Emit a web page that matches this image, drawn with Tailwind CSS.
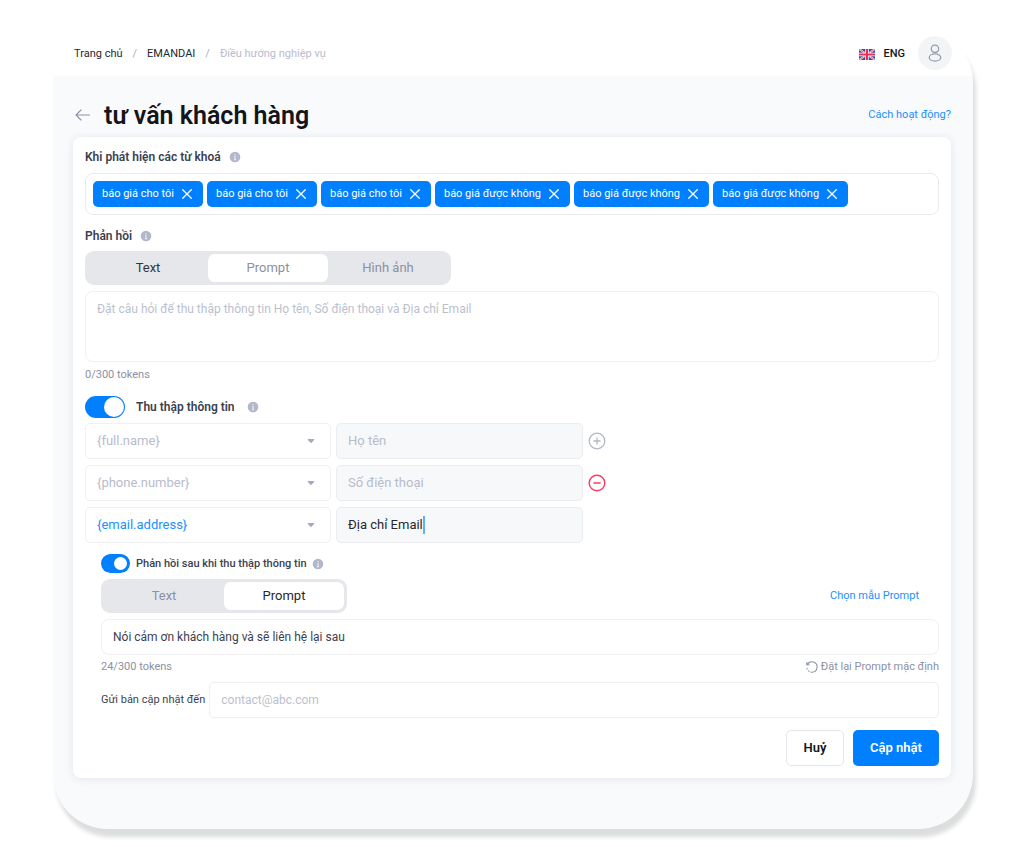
<!DOCTYPE html>
<html lang="vi">
<head>
<meta charset="utf-8">
<meta name="viewport" content="width=device-width, initial-scale=1">
<title>Điều hướng nghiệp vụ</title>
<script src="https://cdn.jsdelivr.net/npm/@tailwindcss/browser@4"></script>
</head>
<body class="bg-white font-['Roboto','Noto_Sans',sans-serif] text-[#14151a]">
<svg class="hidden" aria-hidden="true">
  <symbol id="info" viewBox="0 0 12 12"><circle cx="6" cy="6" r="5.3" fill="#b3b8c9"/><path d="M6 3v1.3M5.2 5.5H6v3M5 8.6h2" stroke="#e9ebf1" stroke-width="1.1" fill="none"/></symbol>
  <symbol id="close" viewBox="0 0 12 12"><path d="M1.7 1.7l8.6 8.6M10.3 1.7l-8.6 8.6" stroke="#fff" stroke-width="1.3" stroke-linecap="round"/></symbol>
  <symbol id="caret" viewBox="0 0 8 6"><path d="M1.3 1.1h5.4c.5 0 .7.5.4.8L4.5 4.7a.7.7 0 0 1-1 0L.9 1.9c-.3-.3-.1-.8.4-.8z" fill="#a5abbd"/></symbol>
</svg>

<div class="mt-7 mr-[51px] mb-[18px] ml-[53px] overflow-hidden rounded-[55px] rounded-tl-none bg-[#f9fafc] shadow-[3px_8px_4px_0_#dcdddd]">
  <header class="flex items-center justify-between bg-white px-[21px] pt-2 pb-[6px]">
    <nav aria-label="Breadcrumb">
      <ol class="flex items-center gap-[10px] pt-[2px] text-[11px]">
        <li><a href="#" class="text-[#26272e]">Trang chủ</a></li>
        <li class="text-[#a9afc0]" aria-hidden="true">/</li>
        <li><a href="#" class="text-[#26272e]">EMANDAI</a></li>
        <li class="text-[#a9afc0]" aria-hidden="true">/</li>
        <li class="text-[#b8bccb]">Điều hướng nghiệp vụ</li>
      </ol>
    </nav>
    <div class="flex items-center gap-[13px]">
      <button type="button" class="flex items-center gap-2 pt-[2px] text-[11px] font-medium">
        <svg class="h-[11px] w-4" viewBox="0 0 16 11"><rect width="16" height="11" rx="1" fill="#3c4aa5"/><path d="M0 0l16 11M16 0L0 11" stroke="#fff" stroke-width="1.8"/><path d="M0 0l16 11M16 0L0 11" stroke="#f0506a" stroke-width=".9"/><path d="M8 0v11M0 5.5h16" stroke="#fff" stroke-width="3.4"/><path d="M8 0v11M0 5.5h16" stroke="#ee2c50" stroke-width="2"/></svg>
        ENG
      </button>
      <button type="button" aria-label="Tài khoản" class="flex size-[34px] items-center justify-center rounded-full bg-[#f3f4f6]">
        <svg class="h-[18px] w-[14px]" viewBox="0 0 14 18" fill="none" stroke="#989eb0" stroke-width="1.3"><circle cx="7" cy="4.8" r="3.7"/><ellipse cx="7" cy="13.5" rx="5.8" ry="3.6"/></svg>
      </button>
    </div>
  </header>

  <main class="pr-[22px] pb-[51px] pl-5">
    <div class="flex items-center justify-between pt-5 pb-[3px] pl-px">
      <div class="flex items-center gap-[13px]">
        <button type="button" aria-label="Quay lại"><svg class="h-4 w-[17px]" viewBox="0 0 17 16" fill="none" stroke="#8d94a8" stroke-width="1.1" stroke-linecap="round" stroke-linejoin="round"><path d="M15.5 8H2M7 3L2 8l5 5"/></svg></button>
        <h1 class="pt-[2px] text-[25px] leading-9 font-semibold">tư vấn khách hàng</h1>
      </div>
      <a href="#" class="text-[11px] text-[#1a90ff]">Cách hoạt động?</a>
    </div>

    <form class="rounded-lg bg-white px-3 pt-[10px] pb-3 shadow-[0_1px_8px_#e2e4e9]" onsubmit="return false">
      <h2 class="flex h-5 items-center gap-2 text-xs font-semibold text-[#3c3f50]">Khi phát hiện các từ khoá <svg class="size-3"><use href="#info"/></svg></h2>
      <div class="mt-[6px] flex flex-wrap gap-1 rounded-lg border border-[#e9eaed] p-[7px] text-[11px] text-white">
        <span class="flex h-[26px] items-center gap-[7px] rounded-[5px] bg-[#007fff] pr-[10px] pl-[9px]">báo giá cho tôi <button type="button" aria-label="Xoá"><svg class="size-3"><use href="#close"/></svg></button></span>
        <span class="flex h-[26px] items-center gap-[7px] rounded-[5px] bg-[#007fff] pr-[10px] pl-[9px]">báo giá cho tôi <button type="button" aria-label="Xoá"><svg class="size-3"><use href="#close"/></svg></button></span>
        <span class="flex h-[26px] items-center gap-[7px] rounded-[5px] bg-[#007fff] pr-[10px] pl-[9px]">báo giá cho tôi <button type="button" aria-label="Xoá"><svg class="size-3"><use href="#close"/></svg></button></span>
        <span class="flex h-[26px] items-center gap-[7px] rounded-[5px] bg-[#007fff] pr-[10px] pl-[9px]">báo giá được không <button type="button" aria-label="Xoá"><svg class="size-3"><use href="#close"/></svg></button></span>
        <span class="flex h-[26px] items-center gap-[7px] rounded-[5px] bg-[#007fff] pr-[10px] pl-[9px]">báo giá được không <button type="button" aria-label="Xoá"><svg class="size-3"><use href="#close"/></svg></button></span>
        <span class="flex h-[26px] items-center gap-[7px] rounded-[5px] bg-[#007fff] pr-[10px] pl-[9px]">báo giá được không <button type="button" aria-label="Xoá"><svg class="size-3"><use href="#close"/></svg></button></span>
      </div>

      <h2 class="mt-[11px] flex h-5 items-center gap-2 text-xs font-semibold text-[#3c3f50]"><label for="prompt">Phản hồi</label> <svg class="size-3"><use href="#info"/></svg></h2>
      <div class="mt-[5px] inline-flex rounded-[9px] bg-[#e6e7eb] p-[3px] align-top text-[13px] text-[#8b91a4]">
        <button type="button" class="h-7 w-30 rounded-[7px] text-[#33353d]">Text</button>
        <button type="button" class="h-7 w-30 rounded-[7px] bg-white">Prompt</button>
        <button type="button" class="h-7 w-30 rounded-[7px]">Hình ảnh</button>
      </div>
      <textarea id="prompt" class="mt-[6px] block h-[71px] w-full resize-none rounded-lg border border-[#f0f0f2] px-[11px] py-2 text-xs leading-[18px] placeholder:text-[#bbbfcd]" placeholder="Đặt câu hỏi để thu thập thông tin Họ tên, Số điện thoại và Địa chỉ Email"></textarea>
      <p class="mt-[3px] text-[11px] leading-5 text-[#8b91a4]">0/300 tokens</p>

      <div class="mt-[11px] flex items-center">
        <input id="collect" type="checkbox" role="switch" checked class="flex h-[22px] w-10 appearance-none items-center justify-end rounded-full bg-[#b8bccb] p-px checked:bg-[#007fff] before:size-5 before:rounded-full before:bg-white">
        <label for="collect" class="ml-[11px] text-xs font-semibold text-[#3c3f50]">Thu thập thông tin</label>
        <svg class="ml-3 size-3"><use href="#info"/></svg>
      </div>

      <div class="mt-[5px] grid grid-cols-[246px_247px_18px] items-center gap-x-[5px] gap-y-[6px] text-[13px]">
        <div class="relative">
          <select aria-label="Biến 1" class="h-9 w-full appearance-none rounded-[5px] border border-[#f0f0f3] bg-white px-[11px] text-[#b8bccb]"><option>{full.name}</option></select>
          <svg class="pointer-events-none absolute top-[15px] right-4 h-[6px] w-2"><use href="#caret"/></svg>
        </div>
        <input aria-label="Tên trường 1" placeholder="Họ tên" class="h-9 w-full rounded-[5px] border border-[#ebecf0] bg-[#f7f8fa] px-[11px] pb-px placeholder:text-[#b8bccb]">
        <button type="button" aria-label="Thêm"><svg class="size-[18px]" viewBox="0 0 18 18" fill="none" stroke="#b3b8c9" stroke-width="1.3" stroke-linecap="round"><circle cx="9" cy="9" r="7.8"/><path d="M5.9 9h6.2M9 5.9v6.2"/></svg></button>

        <div class="relative">
          <select aria-label="Biến 2" class="h-9 w-full appearance-none rounded-[5px] border border-[#f0f0f3] bg-white px-[11px] text-[#b8bccb]"><option>{phone.number}</option></select>
          <svg class="pointer-events-none absolute top-[15px] right-4 h-[6px] w-2"><use href="#caret"/></svg>
        </div>
        <input aria-label="Tên trường 2" placeholder="Số điện thoại" class="h-9 w-full rounded-[5px] border border-[#ebecf0] bg-[#f7f8fa] px-[11px] pb-px placeholder:text-[#b8bccb]">
        <button type="button" aria-label="Bớt"><svg class="size-[18px]" viewBox="0 0 18 18" fill="none" stroke="#ff3860" stroke-width="1.4" stroke-linecap="round"><circle cx="9" cy="9" r="7.8"/><path d="M5.9 9h6.2"/></svg></button>

        <div class="relative">
          <select aria-label="Biến 3" class="h-9 w-full appearance-none rounded-[5px] border border-[#f0f0f3] bg-white px-[11px] text-[#1a90ff]"><option>{email.address}</option></select>
          <svg class="pointer-events-none absolute top-[15px] right-4 h-[6px] w-2"><use href="#caret"/></svg>
        </div>
        <div class="flex h-9 items-center rounded-[5px] border border-[#ebecf0] bg-[#f7f8fa] px-[11px]">
          <input aria-label="Tên trường 3" value="Địa chỉ Email" class="field-sizing-content bg-transparent text-[#26272e] caret-[#1a90ff] outline-none">
          <span class="h-[18px] w-[2px] shrink-0 bg-[#5db1ff]"></span>
        </div>
      </div>

      <section class="mt-[11px] pl-4">
        <div class="flex items-center">
          <input id="reply" type="checkbox" role="switch" checked class="flex h-[19px] w-[29px] appearance-none items-center justify-end rounded-full bg-[#b8bccb] p-[3px] checked:bg-[#007fff] before:size-[13px] before:rounded-full before:bg-white">
          <label for="reply" class="ml-[6px] pt-px text-[11px] font-medium text-[#3c3f50]">Phản hồi sau khi thu thập thông tin</label>
          <svg class="ml-[5px] size-3"><use href="#info"/></svg>
        </div>
        <div class="mt-[6px] flex items-center justify-between pr-5">
          <div class="inline-flex rounded-[9px] bg-[#e6e7eb] p-[3px] text-[13px] text-[#8b91a4]">
            <button type="button" class="h-7 w-30 rounded-[7px]">Text</button>
            <button type="button" class="h-7 w-30 rounded-[7px] bg-white text-[#26272e]">Prompt</button>
          </div>
          <a href="#" class="text-[11px] text-[#1a90ff]">Chọn mẫu Prompt</a>
        </div>
        <input aria-label="Prompt phản hồi" value="Nói cảm ơn khách hàng và sẽ liên hệ lại sau" class="mt-[6px] block h-9 w-full rounded-lg border border-[#f0f0f2] px-[11px] pb-px text-xs text-[#3c3f50]">
        <div class="mt-[2px] flex items-center justify-between text-[11px] leading-5 text-[#8b91a4]">
          <p>24/300 tokens</p>
          <button type="button" class="flex items-center gap-[3px]"><svg class="size-3" viewBox="0 0 12 12" fill="none" stroke="#8b91a4" stroke-width="1.1"><path d="M.8 1v2.8h2.8"/><path d="M1.2 3.7A5.2 5.2 0 1 1 6 11.2"/><path d="M6 11.2A5.2 5.2 0 0 1 .8 6" stroke-dasharray="1.4 1.3"/></svg>Đặt lại Prompt mặc định</button>
        </div>
        <div class="mt-[5px] flex items-center gap-1">
          <label for="mail" class="text-[11px] text-[#3c3f50]">Gửi bản cập nhật đến</label>
          <input id="mail" type="email" placeholder="contact@abc.com" class="h-9 min-w-0 flex-1 rounded-[5px] border border-[#f0f0f2] px-[11px] pb-px text-xs placeholder:text-[#bbbfcd]">
        </div>
      </section>

      <div class="mt-3 flex justify-end gap-[9px] text-[13px] font-semibold">
        <button type="button" class="h-9 w-[58px] rounded-[5px] border border-[#e6e7ed] bg-white">Huỷ</button>
        <button type="submit" class="h-9 w-[86px] rounded-[5px] bg-[#007fff] text-white">Cập nhật</button>
      </div>
    </form>
  </main>
</div>
</body>
</html>
